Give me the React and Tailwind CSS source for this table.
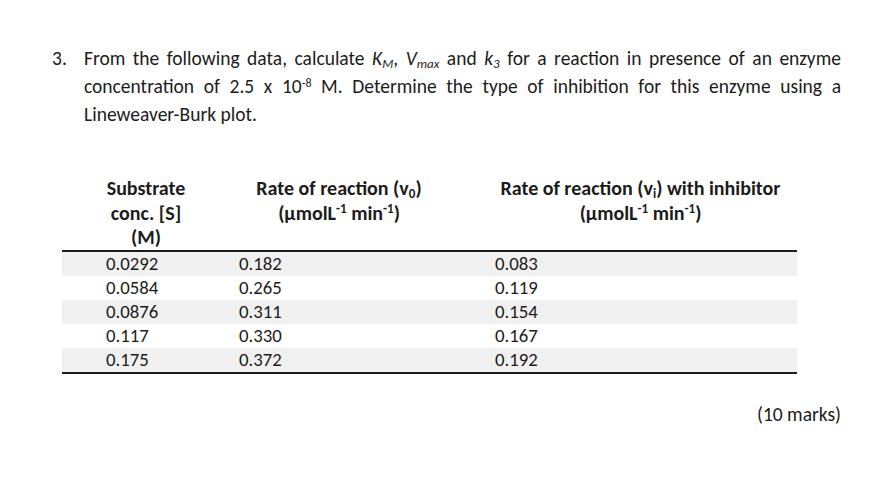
import React from 'react';

const rows = [
    ['0.0292', '0.182', '0.083'],
    ['0.0584', '0.265', '0.119'],
    ['0.0876', '0.311', '0.154'],
    ['0.117', '0.330', '0.167'],
    ['0.175', '0.372', '0.192'],
];

const font = { fontFamily: 'Carlito, Lato, "Open Sans", sans-serif' };

export default function App() {
    return (
        <div className="w-[881px] h-[503px] bg-white text-[#1c1c1c] overflow-hidden" style={font}>
            <div className="pt-[44px] pl-[52px] pr-[40px]">
                {/* Question text */}
                <div className="flex text-[19.5px] leading-[28px]">
                    <span className="w-[32px] shrink-0">3.</span>
                    <div className="flex-1">
                        <div className="text-justify [text-align-last:justify]">
                            From the following data, calculate <i>K<sub className="text-[13px] leading-[0]">M</sub></i>,{' '}
                            <i>V<sub className="text-[13px] leading-[0]">max</sub></i> and{' '}
                            <i>k<sub className="text-[13px] leading-[0]">3</sub></i> for a reaction in presence of an enzyme
                        </div>
                        <div className="text-justify [text-align-last:justify]">
                            concentration of 2.5 x 10<sup className="text-[12px] leading-[0]">-8</sup> M. Determine the type of
                            inhibition for this enzyme using a
                        </div>
                        <div>Lineweaver-Burk plot.</div>
                    </div>
                </div>

                {/* Data table */}
                <div className="ml-[10px] mt-[48px] w-[735px]">
                    <div className="grid grid-cols-[168px_218px_349px] font-bold text-[20px] leading-[24.5px] text-center">
                        <div>
                            Substrate
                            <br />
                            conc. [S]
                            <br />
                            (M)
                        </div>
                        <div>
                            Rate of reaction (v<sub className="text-[13px] leading-[0]">0</sub>)
                            <br />
                            (µmolL<sup className="text-[13px] leading-[0]">-1</sup> min
                            <sup className="text-[13px] leading-[0]">-1</sup>)
                        </div>
                        <div className="pl-[36px]">
                            Rate of reaction (v<sub className="text-[13px] leading-[0]">i</sub>) with inhibitor
                            <br />
                            (µmolL<sup className="text-[13px] leading-[0]">-1</sup> min
                            <sup className="text-[13px] leading-[0]">-1</sup>)
                        </div>
                    </div>
                    <div className="border-t-2 border-b-2 border-[#1c1c1c] text-[18.8px] leading-[24px]">
                        {rows.map((r, i) => (
                            <div
                                key={i}
                                className={`grid grid-cols-[168px_218px_349px] ${i % 2 === 0 ? 'bg-[#f0f0f0]' : 'bg-white'}`}
                            >
                                <div className="pl-[44px]">{r[0]}</div>
                                <div className="pl-[9px]">{r[1]}</div>
                                <div className="pl-[47px]">{r[2]}</div>
                            </div>
                        ))}
                    </div>
                </div>

                <div className="mt-[26px] text-right text-[19.5px] leading-[28px]">(10 marks)</div>
            </div>
        </div>
    );
}
